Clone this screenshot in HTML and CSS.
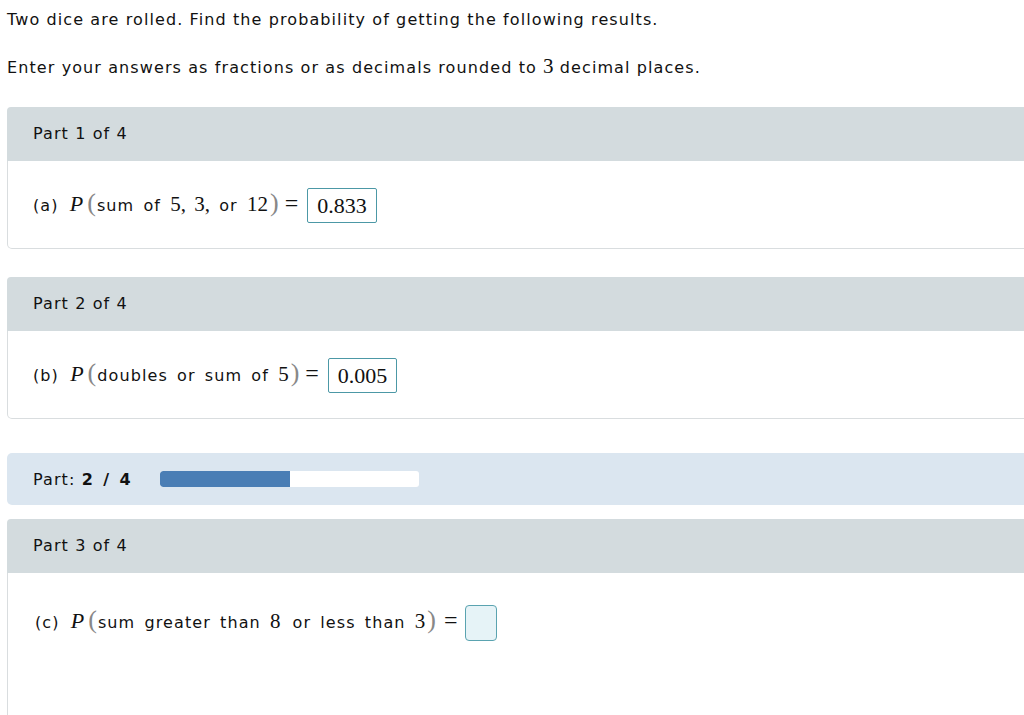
FILE: index.html
```html
<!DOCTYPE html>
<html lang="en">
<head>
  <meta charset="UTF-8" />
  <meta name="viewport" content="width=device-width, initial-scale=1.0" />
  <title>Two dice</title>
  <link rel="stylesheet" href="styles.css">
</head>
<body>

  <p class="intro">Two dice are rolled. Find the probability of getting the following results.</p>
  <p class="intro second">Enter your answers as fractions or as decimals rounded to <span class="num">3</span> decimal places.</p>

  <div class="panel">
    <div class="panel-head">Part 1 of 4</div>
    <div class="panel-body">
      <div class="question">(a) <span class="mvar">P</span><span class="paren">(</span>sum of <span class="num">5, 3,</span> or <span class="num">12</span><span class="paren close">)</span><span class="eq">=</span><span class="answer">0.833</span></div>
    </div>
  </div>

  <div class="panel">
    <div class="panel-head">Part 2 of 4</div>
    <div class="panel-body">
      <div class="question">(b) <span class="mvar">P</span><span class="paren">(</span>doubles or sum of <span class="num">5</span><span class="paren close">)</span><span class="eq">=</span><span class="answer">0.005</span></div>
    </div>
  </div>

  <div class="progress-box">
    <span class="progress-label">Part: <strong>2 / 4</strong></span>
    <div class="progress-track">
      <div class="progress-fill" style="width: 50%"></div>
    </div>
  </div>

  <div class="panel last">
    <div class="panel-head">Part 3 of 4</div>
    <div class="panel-body tall">
      <div class="question">(c) <span class="mvar">P</span><span class="paren">(</span>sum greater than <span class="num after">8</span>or less than <span class="num">3</span><span class="paren close">)</span><span class="eq wide">=</span><span class="answer empty"></span></div>
    </div>
  </div>

</body>
</html>
```

FILE: styles.css
```css
html {
  overflow: hidden;
}

body {
  font-family: 'DejaVu Sans', Verdana, sans-serif;
  font-size: 16px;
  letter-spacing: 1.1px;
  color: #111;
  background-color: white;
  margin: 0;
  padding: 10px 0 0 7px;
}

.intro {
  margin: 0;
  line-height: 20px;
}

.intro.second {
  margin-top: 26px;
  margin-bottom: 29px;
}

.num {
  font-family: 'Liberation Serif', 'Times New Roman', serif;
  font-size: 21px;
  letter-spacing: 0;
}

.num.after {
  margin-right: 12px;
}

.mvar {
  font-family: 'Liberation Serif', 'Times New Roman', serif;
  font-style: italic;
  font-size: 22px;
  letter-spacing: 0;
  margin-left: 2px;
}

.paren {
  font-family: 'Liberation Serif', 'Times New Roman', serif;
  font-size: 26px;
  color: #888;
  letter-spacing: 0;
  margin: 0 1px 0 4px;
}

.paren.close {
  margin: 0 0 0 2px;
}

.eq {
  font-family: 'Liberation Serif', 'Times New Roman', serif;
  font-size: 24px;
  letter-spacing: 0;
  margin: 0 9px 0 6px;
}

.eq.wide {
  margin: 0 8px 0 8px;
}

.panel {
  margin-right: -20px;
  margin-bottom: 28px;
}

.panel-head {
  background-color: #d3dbde;
  border-radius: 4px 0 0 0;
  height: 54px;
  line-height: 54px;
  padding-left: 26px;
}

.panel-body {
  border: 1px solid #d9dddf;
  border-top: none;
  border-radius: 0 0 0 5px;
  height: 87px;
  display: flex;
  align-items: center;
  padding-left: 25px;
}

.panel-body.tall {
  height: 200px;
  align-items: flex-start;
  padding-top: 29px;
  padding-left: 27px;
}

.question {
  white-space: nowrap;
  word-spacing: 3px;
  line-height: 36px;
}

.answer {
  display: inline-block;
  vertical-align: middle;
  position: relative;
  top: -1px;
  font-family: 'Liberation Serif', 'Times New Roman', serif;
  font-size: 22px;
  letter-spacing: 0;
  border: 1px solid #4c98a6;
  border-radius: 2px;
  height: 33px;
  line-height: 33px;
  padding: 0 9px;
}

.answer.empty {
  width: 14px;
  height: 34px;
  padding: 0 8px;
  background-color: #e6f3f7;
  border-color: #5aa3b0;
  border-radius: 4px;
}

.progress-box {
  background-color: #dbe6f0;
  border-radius: 5px 0 0 5px;
  height: 52px;
  margin-top: 34px;
  margin-bottom: 14px;
  margin-right: -20px;
  display: flex;
  align-items: center;
  padding-left: 26px;
}

.progress-label {
  width: 127px;
}

.progress-label strong {
  letter-spacing: 2.4px;
}

.progress-track {
  width: 259px;
  height: 16px;
  background: white;
  border-radius: 3px;
  overflow: hidden;
}

.progress-fill {
  height: 100%;
  background-color: #4a7eb5;
  border-radius: 3px 0 0 3px;
}
```
